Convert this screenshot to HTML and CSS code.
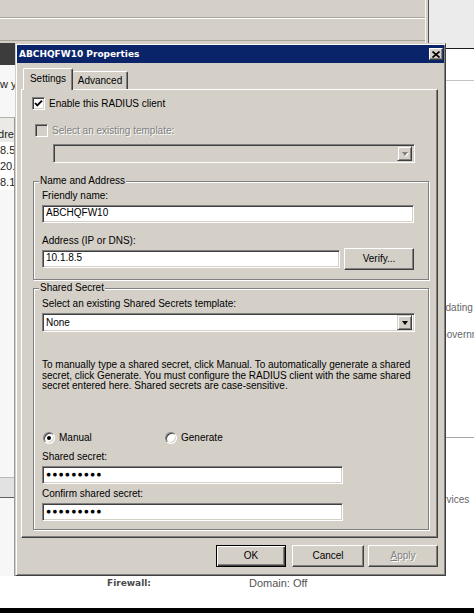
FILE: index.html
```html
<!DOCTYPE html>
<html>
<head>
<meta charset="utf-8">
<link rel="stylesheet" href="styles.css">
</head>
<body>
<div class="desk">
  <div class="top">
    <div class="top-left">
      <div class="bar bar1"></div>
      <div class="bar bar2"></div>
    </div>
    <div class="top-sep"></div>
    <div class="top-right"></div>
  </div>
  <div class="mid">
    <div class="lstrip">
      <div class="ldark"></div>
      <div class="ltext">w y</div>
      <div class="llist">
        <div class="lhead">dre</div>
        <div class="lrow">8.5</div>
        <div class="lrow">20.2</div>
        <div class="lrow">8.11</div>
        <div class="lband"></div>
      </div>
    </div>
    <div class="hole"></div>
    <div class="rstrip">
      <div class="rgray"></div>
      <div class="rline"></div>
      <div class="rtext t1">pdating</div>
      <div class="rtext t2">Government</div>
      <div class="rsep"></div>
      <div class="rtext t3">Services</div>
    </div>
  </div>
  <div class="status">
    <span class="fw">Firewall:</span>
    <span class="dom">Domain: Off</span>
  </div>
  <div class="blackbar"></div>

  <div class="dialog">
    <div class="titlebar">
      <span class="title">ABCHQFW10 Properties</span>
      <span class="close"><svg width="8" height="7" viewBox="0 0 8 7"><path d="M0.5 0.5 L7.5 6.5 M7.5 0.5 L0.5 6.5" stroke="#000" stroke-width="1.6" fill="none"/></svg></span>
    </div>
    <div class="dbody">
      <div class="tabs">
        <div class="tab active">Settings</div>
        <div class="tab">Advanced</div>
      </div>
      <div class="panel">
        <div class="chkrow enable">
          <span class="chk"><svg width="9" height="9" viewBox="0 0 9 9"><polyline points="1,4 3.3,6.4 8,1.6" stroke="#000" stroke-width="1.8" fill="none"/></svg></span>
          <span>Enable this RADIUS client</span>
        </div>
        <div class="chkrow tmpl">
          <span class="chk off"></span>
          <span class="dis">Select an existing template:</span>
        </div>
        <div class="combo combo-dis">
          <span class="ctext"></span>
          <span class="dd"><i class="tri tri-dis"></i></span>
        </div>

        <fieldset class="grp g1">
          <legend>Name and Address</legend>
          <div class="lbl">Friendly name:</div>
          <div class="field f-name">ABCHQFW10</div>
          <div class="lbl l-addr">Address (IP or DNS):</div>
          <div class="addr">
            <div class="field f-addr">10.1.8.5</div>
            <div class="btn verify">Verify...</div>
          </div>
        </fieldset>

        <fieldset class="grp g2">
          <legend>Shared Secret</legend>
          <div class="lbl">Select an existing Shared Secrets template:</div>
          <div class="combo combo-none">
            <span class="ctext">None</span>
            <span class="dd"><i class="tri"></i></span>
          </div>
          <p class="info">To manually type a shared secret, click Manual. To automatically generate a shared<br>secret, click Generate. You must configure the RADIUS client with the same shared<br>secret entered here. Shared secrets are case-sensitive.</p>
          <div class="radios">
            <div class="radio-item first"><span class="radio on"></span><span>Manual</span></div>
            <div class="radio-item"><span class="radio"></span><span>Generate</span></div>
          </div>
          <div class="lbl l-ss">Shared secret:</div>
          <div class="field f-pw">●●●●●●●●●</div>
          <div class="lbl l-cs">Confirm shared secret:</div>
          <div class="field f-pw">●●●●●●●●●</div>
        </fieldset>
      </div>
      <div class="buttons">
        <div class="btn default b-ok">OK</div>
        <div class="btn b-cancel">Cancel</div>
        <div class="btn b-apply"><span class="dis"><u>A</u>pply</span></div>
      </div>
    </div>
  </div>
</div>
</body>
</html>
```
FILE: styles.css
```css
* { box-sizing: border-box; }
html, body { margin: 0; padding: 0; }
body {
  width: 474px; height: 613px; overflow: hidden; background: #fff;
  font-family: "Liberation Sans", Arial, sans-serif; font-size: 10px; color: #000;
}
.desk { position: relative; width: 474px; height: 613px; display: flex; flex-direction: column; overflow: hidden; }

/* background window */
.top { height: 43px; flex: none; display: flex; }
.top-left { width: 426px; background: #d4d0c8; border-right: 1px solid #f6f6f6; display: flex; flex-direction: column; }
.bar1 { height: 18px; border-bottom: 1px solid #a8a49c; }
.bar2 { height: 23px; border-top: 1px solid #fff; border-bottom: 1px solid #a8a49c; }
.top-sep { width: 3px; background: #d4d0c8; border-right: 1px solid #505050; }
.top-right { flex: 1; background: #ebebeb; }

.mid { height: 533px; flex: none; display: flex; }
.lstrip { width: 15px; display: flex; flex-direction: column; background: #f7f7f7; font-size: 11px; color: #222; }
.ldark { height: 22px; background: #3c3c3c; }
.ltext { margin-top: 13px; line-height: 12px; white-space: nowrap; overflow: hidden; }
.llist { margin-top: 27px; flex: 1; border-top: 1px solid #b0b0b0; border-right: 1px solid #9a9a9a; display: flex; flex-direction: column; }
.lhead { height: 24px; padding-top: 9px; line-height: 14px; background: #ebeae6; white-space: nowrap; overflow: hidden; direction: rtl; text-align: left; }
.lrow { height: 16px; line-height: 16px; background: #fff; white-space: nowrap; overflow: hidden; }
.lband { margin-top: 287px; height: 21px; background: #e2e2e2; border-top: 1px solid #b8b8b8; border-bottom: 1px solid #606060; }

.hole { flex: 1; }
.rstrip { width: 28px; display: flex; flex-direction: column; background: #fff; color: #666; font-size: 10px; overflow: hidden; }
.rgray { height: 6px; background: #ebebeb; border-bottom: 1px solid #1a1a1a; }
.rline { height: 32px; border-bottom: 1px solid #c4c4c4; }
.rtext { line-height: 12px; white-space: nowrap; }
.t1 { margin-top: 221px; text-indent: -6px; }
.t2 { margin-top: 15px; text-indent: -7px; }
.rsep { margin-top: 96px; height: 1px; background: #a8a8a8; }
.t3 { margin-top: 56px; text-indent: -15px; }

.status { height: 32px; flex: none; display: flex; padding-top: 1px; line-height: 12px; }
.fw { margin-left: 107px; font: bold 9px "DejaVu Sans", sans-serif; line-height: 12px; color: #4a4a4a; }
.dom { margin-left: 98px; font-size: 11px; color: #555; }
.blackbar { flex: 1; background: #000; }

/* dialog window */
.dialog {
  position: absolute; left: 15px; top: 43px; width: 431px; height: 533px;
  background: #d4d0c8;
  border: 1px solid; border-color: #d4d0c8 #404040 #404040 #d4d0c8;
  box-shadow: inset 1px 1px 0 #fff, inset -1px -1px 0 #808080;
  padding: 1px;
  display: flex; flex-direction: column;
}
.titlebar { height: 18px; flex: none; background: #0a246a; display: flex; align-items: center; justify-content: space-between; padding: 0 1px 0 2px; }
.title { color: #fff; font: bold 9px "DejaVu Sans", sans-serif; line-height: 12px; }
.close {
  width: 14px; height: 12px; background: #d4d0c8; display: flex; align-items: center; justify-content: center;
  border: 1px solid; border-color: #fff #404040 #404040 #fff; box-shadow: inset -1px -1px 0 #808080;
}

.dbody { flex: 1; padding: 5px 6px 0 4px; display: flex; flex-direction: column; }
.tabs { height: 21px; flex: none; display: flex; align-items: flex-end; padding-left: 2px; }
.tab {
  height: 18px; padding-top: 3px; line-height: 12px; text-align: center;
  background: #d4d0c8; border: 1px solid; border-bottom: none; border-color: #fff #404040 #404040 #fff;
  border-radius: 2px 2px 0 0; box-shadow: inset -1px 0 0 #808080;
}
.tab.active { width: 50px; height: 22px; padding-top: 4px; margin-bottom: -1px; position: relative; z-index: 1; }
.tab:not(.active) { width: 55px; border-left: none; }

.panel {
  height: 449px; flex: none; border: 1px solid; border-color: #fff #404040 #404040 #fff;
  box-shadow: inset -1px -1px 0 #808080;
}

.chkrow { display: flex; align-items: center; gap: 4px; height: 13px; line-height: 12px; }
.enable { margin: 7px 0 0 10px; }
.tmpl { margin: 14px 0 0 13px; }
.chk {
  width: 13px; height: 13px; background: #fff; display: flex; align-items: center; justify-content: center;
  border: 1px solid; border-color: #808080 #fff #fff #808080;
  box-shadow: inset 1px 1px 0 #404040, inset -1px -1px 0 #d4d0c8;
}
.chk.off { background: #d4d0c8; }
.dis { color: #808080; text-shadow: 1px 1px 0 #fff; }

.combo {
  height: 19px; display: flex; align-items: center; justify-content: space-between; background: #fff;
  border: 1px solid; border-color: #808080 #fff #fff #808080;
  box-shadow: inset 1px 1px 0 #404040, inset -1px -1px 0 #d4d0c8;
  padding: 2px 2px 2px 3px;
}
.combo-dis { margin: 7px 0 0 31px; width: 362px; background: #d4d0c8; }
.combo-none { margin-top: 3px; width: 373px; }
.ctext { line-height: 13px; }
.dd {
  width: 15px; height: 15px; background: #d4d0c8; display: flex; align-items: center; justify-content: center;
  border: 1px solid; border-color: #d4d0c8 #404040 #404040 #d4d0c8;
  box-shadow: inset 1px 1px 0 #fff, inset -1px -1px 0 #808080;
}
.tri { width: 0; height: 0; border-left: 3.5px solid transparent; border-right: 3.5px solid transparent; border-top: 4px solid #000; margin-top: 1px; }
.tri-dis { border-top-color: #808080; filter: drop-shadow(1px 1px 0 #fff); }

.grp {
  margin: 0 0 0 11px; width: 396px; min-width: 0;
  border: 1px solid #808080;
  box-shadow: inset 1px 1px 0 #fff, 1px 1px 0 #fff;
}
.grp legend { padding: 0 1px; margin-left: -3px; line-height: 12px; background: #d4d0c8; }
.g1 { margin-top: 12px; padding: 3px 8px 9px 8px; }
.g2 { margin-top: 2px; padding: 4px 8px 8px 8px; }

.lbl { line-height: 12px; white-space: nowrap; }
.l-addr { margin-top: 12px; }
.l-ss { margin-top: 7px; }
.l-cs { margin-top: 4px; }

.field {
  height: 18px; margin-top: 3px; background: #fff; line-height: 14px; padding-left: 3px; white-space: nowrap;
  border: 1px solid; border-color: #808080 #fff #fff #808080;
  box-shadow: inset 1px 1px 0 #404040, inset -1px -1px 0 #d4d0c8;
}
.f-name { width: 372px; }
.addr { margin-top: 1px; height: 22px; display: flex; align-items: center; gap: 4px; }
.f-addr { width: 298px; margin-top: 0; }
.f-pw { width: 301px; font-size: 8.6px; letter-spacing: 1.1px; padding-left: 3px; line-height: 14px; }

.btn {
  height: 22px; display: flex; align-items: center; justify-content: center; background: #d4d0c8; line-height: 12px;
  border: 1px solid; border-color: #fff #404040 #404040 #fff;
  box-shadow: inset -1px -1px 0 #808080;
}
.verify { width: 70px; }
.btn.default {
  border-color: #000;
  box-shadow: inset 1px 1px 0 #fff, inset -1px -1px 0 #404040, inset -2px -2px 0 #808080;
}

.info { margin: 28px 0 0 0; line-height: 10.5px; white-space: nowrap; }
.radios { margin-top: 40px; height: 12px; display: flex; align-items: center; line-height: 12px; }
.radio-item { display: flex; align-items: center; gap: 4px; }
.radio-item.first { width: 122px; margin-left: 1px; }
.radio {
  width: 12px; height: 12px; border-radius: 50%; background: #fff; position: relative;
  border: 1px solid; border-color: #808080 #fff #fff #808080;
  box-shadow: inset 1px 1px 0 #404040, inset -1px -1px 0 #d4d0c8;
}
.radio.on::after {
  content: ""; position: absolute; left: 3px; top: 3px; width: 4px; height: 4px; border-radius: 50%; background: #000;
}

.buttons { margin-top: 7px; display: flex; justify-content: flex-end; }
.b-ok { width: 70px; }
.b-cancel { width: 72px; margin-left: 6px; }
.b-apply { width: 70px; margin-left: 4px; }
```
